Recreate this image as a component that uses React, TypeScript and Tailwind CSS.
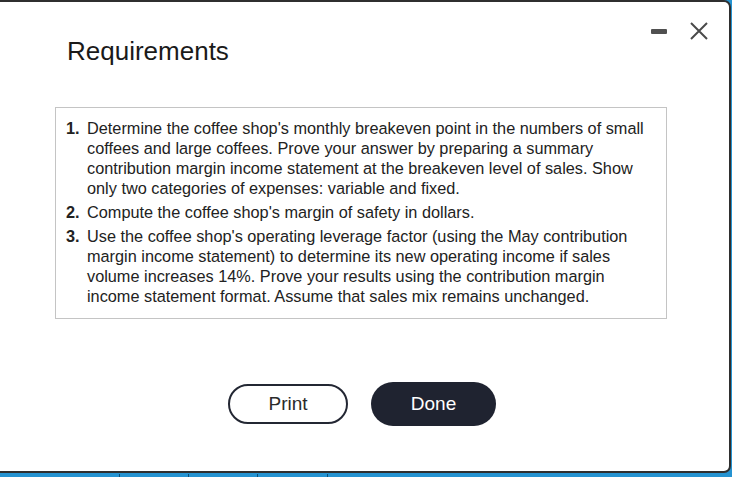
import * as React from "react";

const items: string[] = [
  "Determine the coffee shop's monthly breakeven point in the numbers of small coffees and large coffees. Prove your answer by preparing a summary contribution margin income statement at the breakeven level of sales. Show only two categories of expenses: variable and fixed.",
  "Compute the coffee shop's margin of safety in dollars.",
  "Use the coffee shop's operating leverage factor (using the May contribution margin income statement) to determine its new operating income if sales volume increases 14%. Prove your results using the contribution margin income statement format. Assume that sales mix remains unchanged.",
];

export default function App() {
  return (
    <div
      className="w-[732px] h-[477px] bg-[#2593d1] overflow-hidden flex flex-col"
      style={{ fontFamily: '"Liberation Sans", Arial, sans-serif' }}
    >
      <div className="relative w-[731px] h-[473px] shrink-0 bg-white border-t-2 border-r-2 border-b-2 border-[#2f2f2f] rounded-tr-[7px] rounded-br-[7px] flex flex-col">
        {/* window controls */}
        <div className="absolute right-[20px] top-[19px] flex items-center gap-[22px]">
          <div className="w-[16px] h-[5px] bg-[#505050] rounded-[1px]" />
          <svg width="20" height="20" viewBox="0 0 20 20" className="text-[#4a4a4a]">
            <path d="M2 2 L18 18 M18 2 L2 18" stroke="currentColor" strokeWidth="2" fill="none" />
          </svg>
        </div>

        <h1 className="ml-[67px] mt-[34px] text-[26px] leading-[30px] text-[#1a1a1a]">
          Requirements
        </h1>

        <div className="ml-[55px] mt-[41px] w-[612px] border border-[#c4c4c4] pt-[10px] pb-[12px] pl-[10px] pr-[8px]">
          <ol className="flex flex-col gap-[4px] text-[16.3px] leading-[20px] text-[#222]">
            {items.map((text, i) => (
              <li key={i} className="flex">
                <span className="w-[21px] shrink-0 font-bold">{i + 1}.</span>
                <span>{text}</span>
              </li>
            ))}
          </ol>
        </div>

        <div className="mt-[63px] flex items-center justify-center gap-[23px] pr-[5px]">
          <button className="w-[120px] h-[40px] rounded-full border-2 border-[#232733] bg-white text-[19px] text-[#2b2b2b]">
            Print
          </button>
          <button className="w-[125px] h-[44px] rounded-full bg-[#1f2330] text-[19px] text-white">
            Done
          </button>
        </div>
      </div>
      <div className="flex-1 relative">
        <div className="absolute left-[119px] top-[1px] w-[1px] h-[3px] bg-[#0b4f7a]" />
        <div className="absolute left-[188px] top-[1px] w-[1px] h-[3px] bg-[#0b4f7a]" />
        <div className="absolute left-[257px] top-[1px] w-[1px] h-[3px] bg-[#0b4f7a]" />
        <div className="absolute left-[327px] top-[1px] w-[1px] h-[3px] bg-[#0b4f7a]" />
      </div>
    </div>
  );
}
